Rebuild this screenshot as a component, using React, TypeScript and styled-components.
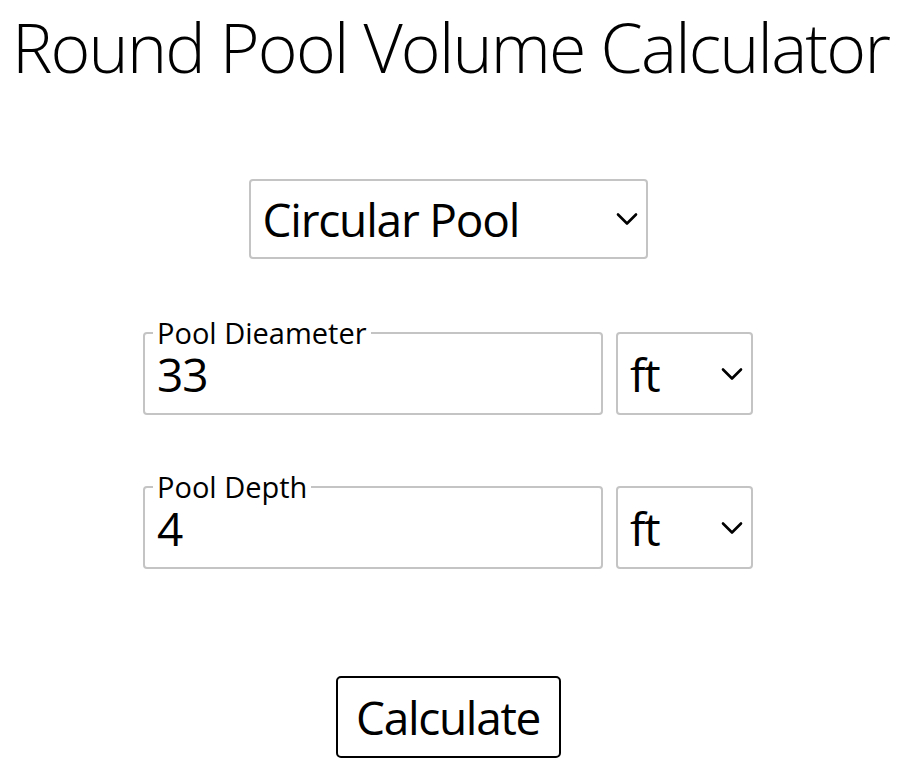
import React, { useState } from "react";
import styled, { createGlobalStyle } from "styled-components";

const GlobalStyle = createGlobalStyle`
  html, body {
    margin: 0;
    padding: 0;
    background: #ffffff;
    color: #000000;
    font-family: "Open Sans", "Noto Sans", sans-serif;
  }
`;

const Page = styled.div`
  display: flex;
  flex-direction: column;
  align-items: center;
`;

const Title = styled.h1`
  margin: 0;
  font-weight: 300;
  font-size: 68px;
  line-height: 93px;
  letter-spacing: -1.8px;
  white-space: nowrap;
`;

const Form = styled.form`
  display: flex;
  flex-direction: column;
  align-items: center;
  margin-left: -5px;
`;

const SelectWrap = styled.div<{ $width: number; $height: number }>`
  position: relative;
  width: ${({ $width }) => $width}px;
  height: ${({ $height }) => $height}px;
  flex: none;
`;

const Select = styled.select`
  appearance: none;
  -webkit-appearance: none;
  width: 100%;
  height: 100%;
  box-sizing: border-box;
  border: 2px solid #c4c4c4;
  border-radius: 4px;
  background: #ffffff;
  color: #000000;
  font-family: inherit;
  font-size: 46px;
  letter-spacing: -1.2px;
  padding: 0 40px 0 12px;
  outline: none;
`;

const Chevron = styled.svg`
  position: absolute;
  right: 10px;
  top: 50%;
  width: 22px;
  height: 14px;
  margin-top: -7px;
  pointer-events: none;
`;

const PoolType = styled.div`
  margin-top: 86px;
`;

const Row = styled.div<{ $gap: number }>`
  display: flex;
  align-items: flex-end;
  gap: 13px;
  margin-top: ${({ $gap }) => $gap}px;
`;

const Fieldset = styled.fieldset`
  width: 460px;
  box-sizing: border-box;
  margin: 0;
  padding: 0 8px;
  border: 2px solid #c4c4c4;
  border-radius: 4px;
  min-width: 0;
`;

const Legend = styled.legend`
  padding: 0 4px;
  font-size: 29px;
  line-height: 32px;
`;

const Input = styled.input`
  display: block;
  width: 100%;
  height: 64px;
  box-sizing: border-box;
  border: none;
  outline: none;
  padding: 0 4px 15px;
  font-family: inherit;
  font-size: 46px;
  letter-spacing: -1px;
  color: #000000;
  background: transparent;
`;

const Button = styled.button`
  margin-top: 107px;
  width: 225px;
  height: 82px;
  box-sizing: border-box;
  border: 2px solid #000000;
  border-radius: 5px;
  background: #ffffff;
  color: #000000;
  font-family: inherit;
  font-size: 46px;
  letter-spacing: -1.3px;
  padding: 0;
  cursor: pointer;
`;

const ArrowDown = () => (
  <Chevron viewBox="0 0 22 14">
    <polyline
      points="2,2.5 11,11.5 20,2.5"
      fill="none"
      stroke="#000"
      strokeWidth="2.6"
      strokeLinecap="round"
      strokeLinejoin="round"
    />
  </Chevron>
);

const UnitSelect = ({ value, onChange }) => (
  <SelectWrap $width={137} $height={83}>
    <Select value={value} onChange={(e) => onChange(e.target.value)}>
      <option value="ft">ft</option>
      <option value="m">m</option>
      <option value="in">in</option>
    </Select>
    <ArrowDown />
  </SelectWrap>
);

const Field = ({ label, value, onChange, unit, onUnit, gap }) => (
  <Row $gap={gap}>
    <Fieldset>
      <Legend>{label}</Legend>
      <Input value={value} onChange={(e) => onChange(e.target.value)} />
    </Fieldset>
    <UnitSelect value={unit} onChange={onUnit} />
  </Row>
);

export default function App() {
  const [shape, setShape] = useState("circular");
  const [diameter, setDiameter] = useState("33");
  const [depth, setDepth] = useState("4");
  const [diameterUnit, setDiameterUnit] = useState("ft");
  const [depthUnit, setDepthUnit] = useState("ft");

  return (
    <>
      <GlobalStyle />
      <Page>
        <Title>Round Pool Volume Calculator</Title>
        <Form onSubmit={(e) => e.preventDefault()}>
          <PoolType>
            <SelectWrap $width={399} $height={80}>
              <Select value={shape} onChange={(e) => setShape(e.target.value)}>
                <option value="circular">Circular Pool</option>
                <option value="oval">Oval Pool</option>
              </Select>
              <ArrowDown />
            </SelectWrap>
          </PoolType>
          <Field
            label="Pool Dieameter"
            value={diameter}
            onChange={setDiameter}
            unit={diameterUnit}
            onUnit={setDiameterUnit}
            gap={58}
          />
          <Field
            label="Pool Depth"
            value={depth}
            onChange={setDepth}
            unit={depthUnit}
            onUnit={setDepthUnit}
            gap={56}
          />
          <Button type="submit">Calculate</Button>
        </Form>
      </Page>
    </>
  );
}
